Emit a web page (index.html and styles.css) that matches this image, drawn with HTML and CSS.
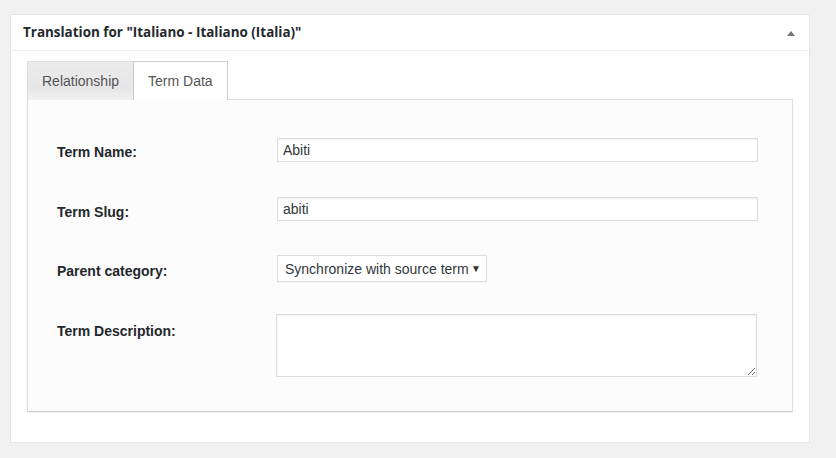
FILE: index.html
```html
<!DOCTYPE html>
<html>
<head>
<meta charset="utf-8">
<link rel="stylesheet" href="styles.css">
</head>
<body>
<div class="postbox">
  <div class="postbox-header">
    <h2 class="postbox-title">Translation for "Italiano - Italiano (Italia)"</h2>
    <span class="toggle-arrow"></span>
  </div>
  <div class="postbox-inside">
    <div class="tabs">
      <div class="tab">Relationship</div>
      <div class="tab tab-active">Term Data</div>
    </div>
    <div class="tab-panel">
      <div class="form-row row-name">
        <label class="field-label lbl-1">Term Name:</label>
        <input class="text-input" type="text" value="Abiti">
      </div>
      <div class="form-row row-slug">
        <label class="field-label lbl-2">Term Slug:</label>
        <input class="text-input" type="text" value="abiti">
      </div>
      <div class="form-row row-parent">
        <label class="field-label lbl-3">Parent category:</label>
        <div class="select-box">
          <span class="select-text">Synchronize with source term</span>
          <span class="select-arrow">▼</span>
        </div>
      </div>
      <div class="form-row row-desc">
        <label class="field-label lbl-4">Term Description:</label>
        <textarea class="text-area"></textarea>
      </div>
    </div>
  </div>
</div>
</body>
</html>
```

FILE: styles.css
```css
* { box-sizing: border-box; }
html, body {
  margin: 0;
  background: #f1f1f1;
}
body {
  padding: 14px 0 0 10px;
  font-family: "Liberation Sans", Arial, sans-serif;
  font-size: 14px;
  color: #23282d;
}
.postbox {
  width: 800px;
  background: #fff;
  border: 1px solid #e5e5e5;
  box-shadow: 0 1px 1px rgba(0,0,0,0.04);
}
.postbox-header {
  height: 36px;
  border-bottom: 1px solid #eee;
  display: flex;
  align-items: center;
  justify-content: space-between;
  padding: 0 14px 0 12px;
}
.postbox-title {
  margin: 0;
  font-family: "Open Sans", sans-serif;
  font-size: 13.45px;
  font-weight: 700;
  color: #23282d;
  line-height: 1;
  padding-top: 1px;
}
.toggle-arrow {
  width: 0;
  height: 0;
  border-left: 4px solid transparent;
  border-right: 4px solid transparent;
  border-bottom: 5px solid #72777c;
  margin-top: 1px;
}
.postbox-inside {
  padding: 10px 16px 30px 16px;
}
.tabs {
  display: flex;
  position: relative;
  z-index: 1;
  margin-bottom: -1px;
}
.tab {
  padding: 10px 14px 10px 14px;
  line-height: 18px;
  font-size: 14px;
  color: #555;
  border: 1px solid #ddd;
  border-right: none;
  border-bottom: none;
  background: linear-gradient(#ececec, #e6e6e6 70%, #f2f2f2);
}
.tab-active {
  background: #fff;
  border: 1px solid #ccc;
  border-bottom: none;
  height: 39px;
}
.tab-panel {
  background: #fcfcfc;
  border: 1px solid #ddd;
  border-bottom-color: #ccc;
  box-shadow: 0 1px 1px rgba(0,0,0,0.05);
  padding: 38px 0 34px 29px;
}
.form-row {
  display: flex;
  align-items: flex-start;
}
.row-slug { margin-top: 35px; }
.row-parent { margin-top: 34px; }
.row-desc { margin-top: 32px; }
.field-label {
  width: 220px;
  flex: none;
  font-weight: 700;
  font-size: 14px;
  line-height: 18px;
  color: #23282d;
}
.lbl-1 { padding-top: 5px; }
.lbl-2 { padding-top: 6px; }
.lbl-3 { padding-top: 7px; }
.lbl-4 { padding-top: 8px; }
.text-input {
  width: 481px;
  height: 24px;
  margin: 0;
  padding: 0 5px;
  border: 1px solid #ddd;
  box-shadow: inset 0 1px 2px rgba(0,0,0,0.07);
  background: #fff;
  font-family: "Liberation Sans", Arial, sans-serif;
  font-size: 14px;
  color: #32373c;
  outline: none;
}
.select-box {
  width: 210px;
  height: 27px;
  border: 1px solid #ddd;
  box-shadow: 0 1px 1px rgba(0,0,0,0.03);
  background: #fff;
  display: flex;
  align-items: center;
  justify-content: space-between;
  padding: 0 5px 0 7px;
  color: #32373c;
  font-size: 14px;
}
.select-arrow {
  font-size: 10px;
  color: #333;
}
.text-area {
  display: block;
  width: 481px;
  height: 63px;
  margin: 0 0 0 -1px;
  border: 1px solid #ddd;
  box-shadow: inset 0 1px 2px rgba(0,0,0,0.07);
  background: #fff;
  resize: both;
  outline: none;
}
```
